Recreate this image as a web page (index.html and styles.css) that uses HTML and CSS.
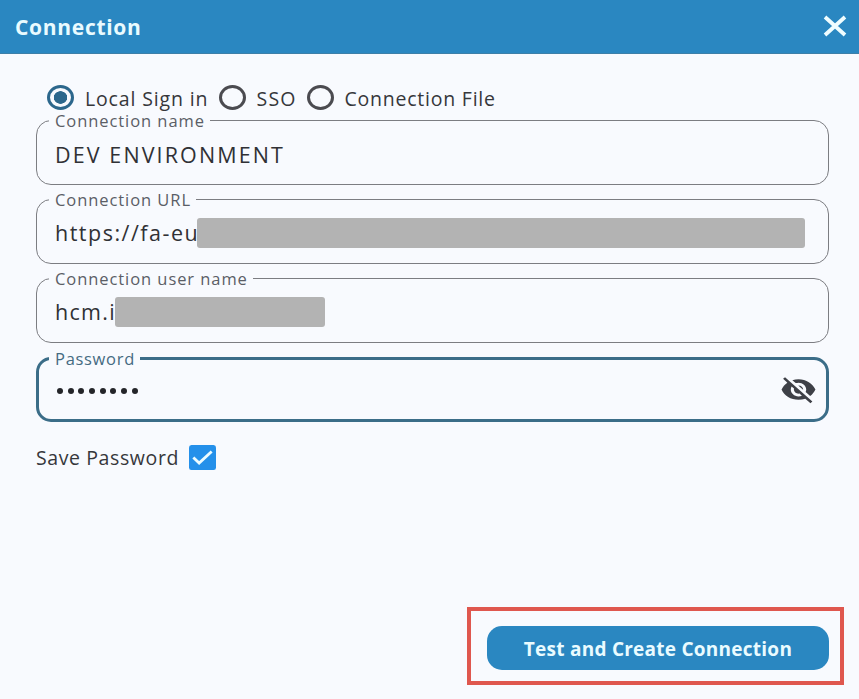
FILE: index.html
```html
<!DOCTYPE html>
<html lang="en">
<head>
<meta charset="utf-8">
<title>Connection</title>
<link rel="stylesheet" href="styles.css">
</head>
<body>
<main class="dialog">
  <header class="header">
    <h1 class="title">Connection</h1>
    <svg class="close" width="24" height="22" viewBox="0 0 24 22"><path d="M2 2 22 20M22 2 2 20"/></svg>
  </header>
  <form class="form">
    <div class="modes">
      <span class="radio radio-on"></span><span class="mode mode-local">Local Sign in</span>
      <span class="radio"></span><span class="mode mode-sso">SSO</span>
      <span class="radio"></span><span class="mode mode-file">Connection File</span>
    </div>
    <fieldset class="field">
      <legend class="label">Connection name</legend>
      <div class="value"><span class="v-name">DEV ENVIRONMENT</span></div>
    </fieldset>
    <fieldset class="field">
      <legend class="label">Connection URL</legend>
      <div class="value"><span class="v-url">https://fa-eu</span><span class="mask mask-url"></span></div>
    </fieldset>
    <fieldset class="field">
      <legend class="label">Connection user name</legend>
      <div class="value"><span class="v-user">hcm.i</span><span class="mask mask-user"></span></div>
    </fieldset>
    <fieldset class="field field-focus">
      <legend class="label">Password</legend>
      <div class="value">
        <span class="dots"><i></i><i></i><i></i><i></i><i></i><i></i><i></i><i></i></span>
        <svg class="eye" width="37" height="33" viewBox="0 0 24 24" preserveAspectRatio="none"><path d="M12 7c2.76 0 5 2.24 5 5 0 .65-.13 1.26-.36 1.83l2.92 2.92c1.51-1.26 2.7-2.89 3.43-4.75-1.73-4.39-6-7.5-11-7.5-1.4 0-2.74.25-3.98.7l2.16 2.16C10.74 7.13 11.35 7 12 7zM2 4.27l2.28 2.28.46.46C3.08 8.3 1.78 10.02 1 12c1.73 4.39 6 7.5 11 7.5 1.55 0 3.03-.3 4.38-.84l.42.42L19.73 22 21 20.73 3.27 3 2 4.27zM7.53 9.8l1.55 1.55c-.05.21-.08.43-.08.65 0 1.66 1.34 3 3 3 .22 0 .44-.03.65-.08l1.55 1.55c-.67.33-1.41.53-2.2.53-2.76 0-5-2.24-5-5 0-.79.2-1.53.53-2.2zm4.31-.78 3.15 3.15.02-.16c0-1.66-1.34-3-3-3l-.17.01z"/></svg>
      </div>
    </fieldset>
    <div class="save">
      <span class="save-text">Save Password</span>
      <svg class="check" width="27" height="25" viewBox="0 0 28 25" preserveAspectRatio="none"><rect width="28" height="25" rx="2.5"/><path d="M4.5 12.5 10.5 18 23.5 6.5"/></svg>
    </div>
  </form>
  <footer class="footer">
    <div class="highlight"><button class="submit" type="button"><span>Test and Create Connection</span></button></div>
  </footer>
</main>
</body>
</html>
```
FILE: styles.css
```css
* { box-sizing: border-box; }
body { margin: 0; background: #f8fafe; color: #36373b; font-family: "Open Sans", "Noto Sans", sans-serif; }
.dialog { width: 859px; height: 699px; display: flex; flex-direction: column; overflow: hidden; }
.header { height: 54px; flex: none; display: flex; align-items: center; justify-content: space-between; padding: 0 12px 0 15px; background: #2a87c1; border-bottom: 1px solid #3d7fa8; }
.title { margin: 0; color: #e9fbff; font-size: 21px; font-weight: 700; line-height: 30px; letter-spacing: .7px; }
.close { fill: none; stroke: #effdff; stroke-width: 3.8; margin-top: -1px; }
.form { padding: 30px 30px 0 36px; flex: 1; }
.modes { display: flex; align-items: center; height: 27px; margin-bottom: -1px; padding-left: 11px; font-size: 19.5px; white-space: nowrap; }
.radio { width: 27px; height: 25px; flex: none; border: 3px solid #4b4b50; border-radius: 50%; }
.radio-on { border-color: #2c678c; background: radial-gradient(ellipse 7px 6.5px, #2c678c 92%, transparent 100%); }
.mode { margin-left: 11px; line-height: 26px; padding-top: 2px; }
.mode-local { width: 122px; margin-right: 11.5px; letter-spacing: .85px; }
.mode-sso { width: 40px; margin-right: 10px; letter-spacing: 1.2px; }
.mode-file { letter-spacing: .77px; }
.field { margin: 0 0 4.5px; padding: 0 12px; height: 74.5px; border: 1.4px solid #7c7d82; border-radius: 15px; min-width: 0; }
.label { padding: 0 5.5px 0 6px; height: 20px; line-height: 21px; font-size: 16.5px; color: #5b5e66; white-space: nowrap; letter-spacing: .93px; }
.value { display: flex; align-items: center; height: 48px; padding-left: 6px; font-size: 21.5px; line-height: 30px; white-space: nowrap; color: #303135; }
.v-name { letter-spacing: 2.1px; padding-top: 1px; }
.v-url { width: 142px; letter-spacing: 1.5px; }
.v-user { width: 60px; letter-spacing: 1.3px; }
.mask { height: 30px; background: #b3b3b3; border-radius: 3px; }
.mask-url { width: 608px; }
.mask-user { width: 210px; }
.field-focus { margin-top: 5.5px; border: 3px solid #3b6d88; padding: 0 10px; height: 74px; }
.field-focus .label { color: #456b82; letter-spacing: .7px; }
.field-focus .value { height: 46px; justify-content: space-between; }
.dots { display: flex; gap: 4.7px; padding-left: 2px; }
.dots i { width: 6px; height: 6px; border-radius: 50%; background: #242529; }
.eye { fill: #3e4047; margin: -4px -1px 0 0; }
.save { display: flex; align-items: center; margin-top: 20px; font-size: 19.5px; line-height: 28px; }
.save-text { width: 153px; padding-top: 2px; letter-spacing: .6px; white-space: nowrap; }
.check rect { fill: #2490ea; }
.check path { fill: none; stroke: #edfcff; stroke-width: 3; }
.footer { display: flex; justify-content: flex-end; padding: 0 15px 14px 0; }
.highlight { width: 377px; height: 78px; padding: 15px 11px 14px 16px; border: 4px solid #df574e; }
.submit { display: flex; align-items: center; justify-content: center; width: 342px; height: 44px; padding-top: 3px; border: 0; border-radius: 15px; background: #2a87c1; color: #e9fbff; font: 700 19px/28px "Open Sans", sans-serif; letter-spacing: .25px; white-space: nowrap; }
```
